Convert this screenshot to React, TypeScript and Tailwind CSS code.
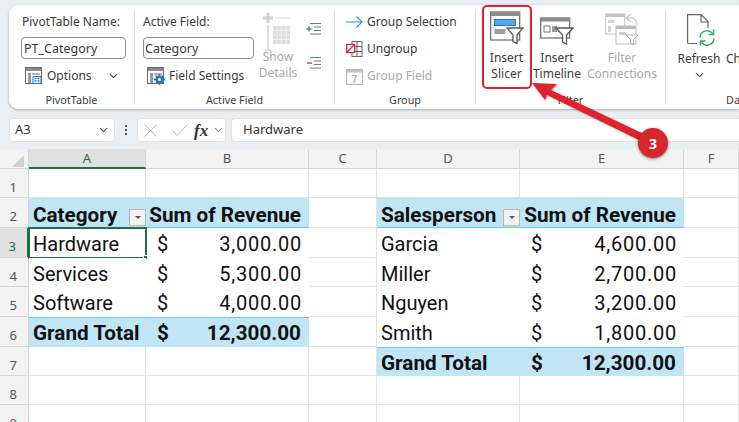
import React from "react";

const Chevron = ({ x = 0, className = "" }: { x?: number; className?: string }) => (
  <svg width="9" height="6" viewBox="0 0 9 6" className={className} style={{ marginLeft: x }}>
    <path d="M1 1.2 L4.5 4.6 L8 1.2" fill="none" stroke="#444" strokeWidth="1.1" />
  </svg>
);

const OptionsIcon = ({ gear }: { gear?: boolean }) => (
  <svg width="18" height="18" viewBox="0 0 18 18">
    <rect x="0.5" y="0.5" width="16" height="16" fill="#fff" stroke="#6b6b6b" />
    <rect x="1" y="1" width="15" height="3" fill="#8a8a8a" />
    <rect x="3" y="6" width="3" height="10" fill="#9a9a9a" />
    <rect x="7" y="6" width="8" height="2" fill="#b5b5b5" />
    {gear ? (
      <g>
        <circle cx="12.5" cy="12.5" r="4" fill="#1f78c8" />
        <path d="M12.5 7v11M7 12.5h11M8.6 8.6l7.8 7.8M16.4 8.6l-7.8 7.8" stroke="#1f78c8" strokeWidth="1.4" />
        <circle cx="12.5" cy="12.5" r="1.5" fill="#fff" />
      </g>
    ) : (
      <g>
        <rect x="8" y="9.5" width="8" height="7" fill="#fff" stroke="#1f78c8" />
        <path d="M9.5 11.5h2M12.5 11.5h2M9.5 14h2M12.5 14h2" stroke="#1f78c8" strokeWidth="1.3" />
      </g>
    )}
  </svg>
);

const ShowDetailsIcon = () => (
  <svg width="30" height="38" viewBox="0 0 30 38">
    <path d="M5 0v10M0 5h10" stroke="#cfcfcf" strokeWidth="3" />
    <path d="M12 5h15" stroke="#d5d5d5" strokeWidth="1" />
    <path d="M5 12v25M2 37h6" stroke="#d5d5d5" strokeWidth="1.5" />
    <rect x="10" y="13" width="17" height="18" fill="#dcdcdc" />
    <path d="M14 13v18M18.500 13v18M23 13v18M10 17.500h17M10 22h17M10 26.500h17" stroke="#f2f2f2" strokeWidth="1" />
  </svg>
);

const ExpandIcon = ({ color, minus }: { color: string; minus?: boolean }) => (
  <svg width="16" height="14" viewBox="0 0 16 14">
    <path d="M4 1.500h11M8 5h7M8 8.500h7M4 12h11" stroke="#777" strokeWidth="1.2" />
    <path d={minus ? "M1 7h5" : "M0.500 7h5M3 4.500v5"} stroke={color} strokeWidth="1.5" />
  </svg>
);

const SlicerIcon = () => (
  <svg width="34" height="34" viewBox="0 0 34 34">
    <rect x="0.700" y="1" width="29" height="28" fill="#fff" stroke="#666" strokeWidth="1.200" />
    <rect x="1" y="1" width="29" height="4" fill="#8c8c8c" />
    <rect x="4.500" y="8.500" width="21" height="6" fill="#5aa7e6" stroke="#1f78c8" />
    <rect x="4.500" y="18" width="11" height="5" fill="#a0a0a0" />
    <path d="M17 17h16l-6 7v8.500l-4-2v-6.500z" fill="#fff" stroke="#555" strokeWidth="1.300" />
  </svg>
);

const TimelineIcon = () => (
  <svg width="34" height="28" viewBox="0 0 34 28">
    <rect x="0.700" y="1" width="29" height="20" fill="#fff" stroke="#666" strokeWidth="1.200" />
    <rect x="1" y="1" width="29" height="3.500" fill="#8c8c8c" />
    <rect x="4" y="9" width="6" height="6" fill="#fff" stroke="#777" />
    <rect x="12" y="9" width="5" height="6" fill="#999" />
    <path d="M16 11h17l-6.500 7v9l-4-2v-7z" fill="#fff" stroke="#555" strokeWidth="1.300" />
  </svg>
);

const ConnectionsIcon = () => (
  <svg width="34" height="32" viewBox="0 0 34 32">
    <rect x="0.700" y="1" width="19" height="20" fill="#fff" stroke="#c4c4c4" />
    <rect x="1" y="1" width="19" height="3" fill="#c4c4c4" />
    <rect x="3" y="7" width="6" height="3" fill="#d2d2d2" />
    <rect x="3" y="13" width="3" height="6" fill="#d2d2d2" />
    <path d="M26 1l-5 4 5 4M21 5h5a6 6 0 0 1 6 7" fill="none" stroke="#c4c4c4" strokeWidth="1.200" />
    <rect x="11" y="13" width="20" height="18" fill="#fff" stroke="#bdbdbd" />
    <rect x="11" y="13" width="20" height="3" fill="#bdbdbd" />
    <rect x="14" y="19" width="7" height="3" fill="#cdcdcd" />
    <path d="M21 22h12l-4.500 4.500v5l-3-1.500v-3.500z" fill="#fff" stroke="#b0b0b0" />
  </svg>
);

const RefreshIcon = () => (
  <svg width="29" height="32" viewBox="0 0 29 32">
    <path d="M.6 29.5V.6H14L21 7.600V14M14 .6V8H21M.6 29.500H10" fill="none" stroke="#666" strokeWidth="1.200" />
    <path d="M13 23.500a7 7 0 0 1 12.500-4" fill="none" stroke="#2fae60" strokeWidth="1.500" />
    <path d="M26.500 15.500v5h-5" fill="none" stroke="#2fae60" strokeWidth="1.500" />
    <path d="M27 24.500a7 7 0 0 1-12.500 4" fill="none" stroke="#2fae60" strokeWidth="1.500" />
    <path d="M13.500 31.500v-4.500h5" fill="none" stroke="#2fae60" strokeWidth="1.500" />
  </svg>
);

const UngroupIcon = () => (
  <svg width="17" height="16" viewBox="0 0 17 16">
    <rect x="6" y="0.500" width="10" height="15" fill="#fff" stroke="#666" />
    <path d="M6 5.500h10M6 10.500h10M11 .5v15" stroke="#666" />
    <rect x="0.700" y="3.500" width="8" height="8" fill="#fff" stroke="#d9262b" strokeWidth="1.300" />
    <path d="M1 11l7.500-7.500" stroke="#d9262b" strokeWidth="1.300" />
  </svg>
);

const CalendarIcon = () => (
  <svg width="17" height="17" viewBox="0 0 17 17">
    <rect x="0.500" y="1.500" width="16" height="15" fill="#fafafa" stroke="#b5b5b5" />
    <rect x="1" y="2" width="15" height="2.500" fill="#c6c6c6" />
    <text x="8.500" y="14.500" textAnchor="middle" fontSize="10" fill="#9c9c9c" fontFamily="Liberation Sans, sans-serif">7</text>
  </svg>
);

const FilterButton = () => (
  <div className="w-[17px] h-[17px] self-end mb-[1px] bg-[#f3f3f3] border border-[#b8b8b8] flex items-center justify-center shrink-0">
    <div className="w-0 h-0 border-l-[3px] border-r-[3px] border-t-[3px] border-l-transparent border-r-transparent border-t-[#555]" />
  </div>
);

const Sep = () => <div className="w-px self-stretch my-[5px] bg-[#dcdcdc] shrink-0" />;

const GroupLabel = ({ children }: { children: React.ReactNode }) => (
  <div className="h-[18px] text-[10.8px] leading-[18px] text-[#3c3c3c] text-center shrink-0">{children}</div>
);

const BigBtn = ({ icon, a, b, w, gray, iconH = "h-[47px]" }: { icon: React.ReactNode; a: string; b: React.ReactNode; w: string; gray?: boolean; iconH?: string }) => (
  <div className={`flex flex-col items-center ${w} ${gray ? "text-[#a9a9a9]" : "text-[#3a3a3a]"} text-[12px] leading-[16px]`}>
    <div className={`${iconH} flex items-end justify-center pb-[4px]`}>{icon}</div>
    <div className="whitespace-nowrap mt-[1px]">{a}</div>
    <div className="whitespace-nowrap h-[16px] flex items-center justify-center">{b}</div>
  </div>
);

function Ribbon() {
  return (
    <div className="ml-[9px] mt-[5px] h-[104px] bg-white rounded-l-[9px] shadow-[0_1px_3px_rgba(0,0,0,0.28)] flex font-['Noto_Sans',sans-serif] overflow-hidden text-[#3a3a3a]">
      {/* PivotTable */}
      <div className="w-[125px] shrink-0 flex flex-col">
        <div className="flex-1 pl-[12px]">
          <div className="text-[12px] leading-[16px] mt-[9px] ml-[1px] whitespace-nowrap">PivotTable Name:</div>
          <div className="mt-[7px] w-[105px] h-[22px] border border-[#8f8f8f] rounded-[4px] text-[12.500px] leading-[22px] pl-[2px] text-[#3a3a3a]">PT_Category</div>
          <div className="mt-[6px] flex items-center h-[22px] ml-[4px] text-[12px]">
            <OptionsIcon />
            <span className="ml-[4px]">Options</span>
            <Chevron x={17} />
          </div>
        </div>
        <GroupLabel>PivotTable</GroupLabel>
      </div>
      <Sep />
      {/* Active Field */}
      <div className="w-[199px] shrink-0 flex flex-col">
        <div className="flex-1 flex pl-[8px]">
          <div className="w-[111px]">
            <div className="text-[12px] leading-[16px] mt-[9px] whitespace-nowrap">Active Field:</div>
            <div className="mt-[7px] w-[111px] h-[22px] border border-[#8f8f8f] rounded-[4px] text-[12.500px] leading-[22px] pl-[1px]">Category</div>
            <div className="mt-[6px] flex items-center h-[22px] ml-[4px] text-[12px] whitespace-nowrap">
              <OptionsIcon gear />
              <span className="ml-[4px]">Field Settings</span>
            </div>
          </div>
          <div className="w-[46px] ml-[1px] flex flex-col items-center text-[12px] leading-[16px] text-[#a9a9a9]">
            <div className="mt-[8px] h-[36px]"><ShowDetailsIcon /></div>
            <div>Show</div>
            <div>Details</div>
          </div>
          <div className="ml-[5px] flex flex-col">
            <div className="mt-[17px]"><ExpandIcon color="#2fa84f" /></div>
            <div className="mt-[20px]"><ExpandIcon color="#d9453f" minus /></div>
          </div>
        </div>
        <GroupLabel>Active Field</GroupLabel>
      </div>
      <Sep />
      {/* Group */}
      <div className="w-[140px] shrink-0 flex flex-col">
        <div className="flex-1 pl-[11px] text-[12px] leading-[16px]">
          <div className="mt-[9px] flex items-center gap-[4px] h-[16px]">
            <svg width="17" height="12" viewBox="0 0 17 12"><path d="M0 6h16M10.500 .5L16 6l-5.500 5.500" fill="none" stroke="#2f8fe0" strokeWidth="1.100" /></svg>
            <span>Group Selection</span>
          </div>
          <div className="mt-[11px] flex items-center gap-[4px] h-[16px]">
            <UngroupIcon />
            <span>Ungroup</span>
          </div>
          <div className="mt-[11px] flex items-center gap-[4px] h-[16px] text-[#a9a9a9]">
            <CalendarIcon />
            <span>Group Field</span>
          </div>
        </div>
        <GroupLabel>Group</GroupLabel>
      </div>
      <Sep />
      {/* Filter */}
      <div className="w-[189px] shrink-0 flex flex-col">
        <div className="flex-1 flex pl-[6px]">
          <BigBtn w="w-[49px]" a="Insert" b="Slicer" icon={<div className="ml-[1px]"><SlicerIcon /></div>} iconH="h-[44px]" />
          <BigBtn w="w-[52px]" a="Insert" b="Timeline" icon={<TimelineIcon />} iconH="h-[44px]" />
          <BigBtn w="w-[78px]" gray a="Filter" b="Connections" icon={<ConnectionsIcon />} iconH="h-[44px]" />
        </div>
        <GroupLabel>Filter</GroupLabel>
      </div>
      <Sep />
      {/* Data */}
      <div className="flex-1 flex flex-col min-w-0">
        <div className="flex-1 flex pl-[12px]">
          <BigBtn w="w-[42px]" a="Refresh" b={<Chevron />} icon={<div className="ml-[5px]"><RefreshIcon /></div>} iconH="h-[45px]" />
          <div className="ml-[6px] flex flex-col text-[12px] leading-[16px] whitespace-nowrap">
            <div className="h-[45px]" />
            <div className="mt-[1px]">Change Data</div>
            <div className="text-center w-[30px] pl-[22px]">S</div>
          </div>
        </div>
        <div className="h-[18px] text-[10.800px] leading-[18px] text-[#3c3c3c] pl-[60px] whitespace-nowrap">Data</div>
      </div>
    </div>
  );
}

function FormulaBar() {
  return (
    <div className="mt-[9px] ml-[9px] h-[24px] flex font-['Noto_Sans',sans-serif] text-[13px] text-[#333]">
      <div className="w-[106px] h-full bg-white rounded-[4px] border border-[#e1e1e1] flex items-center justify-between pl-[5px] pr-[6px] shrink-0">
        <span>A3</span>
        <Chevron />
      </div>
      <div className="w-[22px] flex flex-col items-center justify-center gap-[2px] shrink-0">
        <div className="w-[2px] h-[2px] bg-[#555]" />
        <div className="w-[2px] h-[2px] bg-[#555]" />
        <div className="w-[2px] h-[2px] bg-[#555]" />
      </div>
      <div className="w-[89px] h-full bg-white rounded-[4px] border border-[#e1e1e1] flex items-center pl-[6px] shrink-0">
        <svg width="13" height="13" viewBox="0 0 13 13"><path d="M.5.500l12 12M12.500.500l-12 12" stroke="#b9b9b9" strokeWidth="1" /></svg>
        <svg className="ml-[15px]" width="16" height="12" viewBox="0 0 16 12"><path d="M.5 6.500l4.500 5L15.500 .5" fill="none" stroke="#b9b9b9" strokeWidth="1" /></svg>
        <span className="ml-[6px] font-['Liberation_Serif',serif] italic font-bold text-[17px] leading-none text-[#333]">fx</span>
        <Chevron x={6} className="opacity-60" />
      </div>
      <div className="ml-[5px] flex-1 h-full bg-white rounded-l-[4px] border border-[#e1e1e1] border-r-0 flex items-center pl-[11px]">Hardware</div>
    </div>
  );
}

const colHeaders = [
  { l: "A", w: "w-[117px]", active: true },
  { l: "B", w: "w-[163px]" },
  { l: "C", w: "w-[68px]" },
  { l: "D", w: "w-[143px]" },
  { l: "E", w: "w-[164px]" },
  { l: "F", w: "w-[55px]" },
];

type Kind = "empty" | "head" | "plain" | "total";
type Row = { n: number; h: string; left: Kind; right: Kind; a?: string; b?: string; d?: string; e?: string };

const rows: Row[] = [
  { n: 1, h: "h-[29px]", left: "empty", right: "empty" },
  { n: 2, h: "h-[30px]", left: "head", right: "head", a: "Category", b: "Sum of Revenue", d: "Salesperson", e: "Sum of Revenue" },
  { n: 3, h: "h-[30px]", left: "plain", right: "plain", a: "Hardware", b: "3,000.00", d: "Garcia", e: "4,600.00" },
  { n: 4, h: "h-[29px]", left: "plain", right: "plain", a: "Services", b: "5,300.00", d: "Miller", e: "2,700.00" },
  { n: 5, h: "h-[30px]", left: "plain", right: "plain", a: "Software", b: "4,000.00", d: "Nguyen", e: "3,200.00" },
  { n: 6, h: "h-[30px]", left: "total", right: "plain", a: "Grand Total", b: "12,300.00", d: "Smith", e: "1,800.00" },
  { n: 7, h: "h-[29px]", left: "empty", right: "total", d: "Grand Total", e: "12,300.00" },
  { n: 8, h: "h-[29px]", left: "empty", right: "empty" },
  { n: 9, h: "h-[29px]", left: "empty", right: "empty" },
];

const kindBg = (k: Kind) =>
  k === "head" || k === "total" ? "bg-[#c0e6f5] font-bold text-[20.700px]" : "bg-white";

const Pair = ({ kind, label, value, lw, vw, selected }: { kind: Kind; label?: string; value?: string; lw: string; vw: string; selected?: boolean }) => {
  if (kind === "empty") {
    return (
      <>
        <div className={`${lw} h-full border-r border-b border-[#e2e2e2] shrink-0`} />
        <div className={`${vw} h-full border-r border-b border-[#e2e2e2] shrink-0`} />
      </>
    );
  }
  const line =
    kind === "head"
      ? "border-b border-[#61cbf3]"
      : kind === "total"
        ? "border-t border-[#61cbf3]"
        : "";
  const textPad = kind === "head" ? "pt-[5px]" : "pt-[2px]";
  return (
    <>
      <div className={`${lw} h-full shrink-0 ${kindBg(kind)} ${line} flex items-center justify-between pl-[4px] relative`}>
        <span className={`whitespace-nowrap ${textPad}`}>{label}</span>
        {kind === "head" && <FilterButton />}
        {selected && (
          <div className="absolute -left-px -top-px -right-px -bottom-px border-2 border-[#1e7145]">
            <div className="absolute -right-[3px] -bottom-[3px] w-[5px] h-[5px] bg-[#1e7145] border border-white" />
          </div>
        )}
      </div>
      <div className={`${vw} h-full shrink-0 ${kindBg(kind)} ${line} flex items-center whitespace-nowrap ${kind === "plain" ? "pr-[7px]" : "pr-[8px]"} ${kind === "head" ? "justify-end" : "justify-between pl-[11px]"}`}>
        {kind === "head" ? (
          <span className={textPad}>{value}</span>
        ) : (
          <>
            <span className={textPad}>$</span>
            <span className={`${textPad} ${kind === "plain" ? "tracking-[0.750px]" : ""}`}>{value}</span>
          </>
        )}
      </div>
    </>
  );
};

function Sheet() {
  return (
    <div className="mt-[7px] bg-white font-['Roboto',sans-serif]">
      <div className="flex h-[20px] bg-[#f3f3f3] border-b border-[#d4d4d4] text-[13px] text-[#555] font-['Noto_Sans',sans-serif]">
        <div className="w-[29px] shrink-0 flex items-end justify-end pr-[4px] pb-[1px] border-r border-[#d4d4d4]">
          <div className="w-0 h-0 border-l-[12px] border-b-[12px] border-l-transparent border-b-[#d2d2d2]" />
        </div>
        {colHeaders.map((c) => (
          <div
            key={c.l}
            className={`${c.w} shrink-0 flex items-center justify-center pt-[1px] border-r border-[#d4d4d4] ${c.active ? "bg-[#e1e1e1] text-[#1e7145] border-b-2 border-b-[#1e7145] h-[20px]" : ""}`}
          >
            {c.l}
          </div>
        ))}
      </div>
      {rows.map((r) => (
        <div key={r.n} className={`flex ${r.h} text-[20px] leading-none text-[#111]`}>
          <div className={`w-[29px] shrink-0 border-r border-b border-[#d4d4d4] flex items-center justify-end pr-[11px] pt-[8px] text-[13px] font-['Noto_Sans',sans-serif] ${r.n === 3 ? "bg-[#e1e1e1] text-[#1e7145] border-r-2 border-r-[#1e7145]" : "bg-[#f3f3f3] text-[#555]"}`}>
            {r.n}
          </div>
          <Pair kind={r.left} label={r.a} value={r.b} lw="w-[117px]" vw="w-[163px]" selected={r.n === 3} />
          <div className="w-[68px] h-full border-r border-b border-[#e2e2e2] shrink-0" />
          <Pair kind={r.right} label={r.d} value={r.e} lw="w-[143px]" vw="w-[164px]" />
          <div className="w-[55px] h-full border-r border-b border-[#e2e2e2] shrink-0" />
        </div>
      ))}
    </div>
  );
}

function Annotation() {
  return (
    <>
      <div className="absolute left-[482px] top-[5px] w-[50px] h-[84px] border-2 border-[#e0222a] rounded-[5px]" />
      <svg className="absolute left-[520px] top-[70px] drop-shadow-[1px_1px_1px_rgba(0,0,0,0.3)]" width="150" height="90" viewBox="520 70 150 90">
        <polygon points="532,83 557,84 551,90 646,135 643,142 547,95 545,100" fill="#e0222a" />
      </svg>
      <div className="absolute left-[638px] top-[128px] w-[30px] h-[30px] rounded-full bg-[#d7262c] shadow-[0_1px_3px_rgba(0,0,0,0.5)] flex items-center justify-center text-white font-bold text-[14px] font-['Noto_Sans',sans-serif]">
        3
      </div>
    </>
  );
}

export default function App() {
  return (
    <div className="relative w-[739px] h-[422px] overflow-hidden bg-[#e9eef2]">
      <Ribbon />
      <FormulaBar />
      <Sheet />
      <Annotation />
    </div>
  );
}
